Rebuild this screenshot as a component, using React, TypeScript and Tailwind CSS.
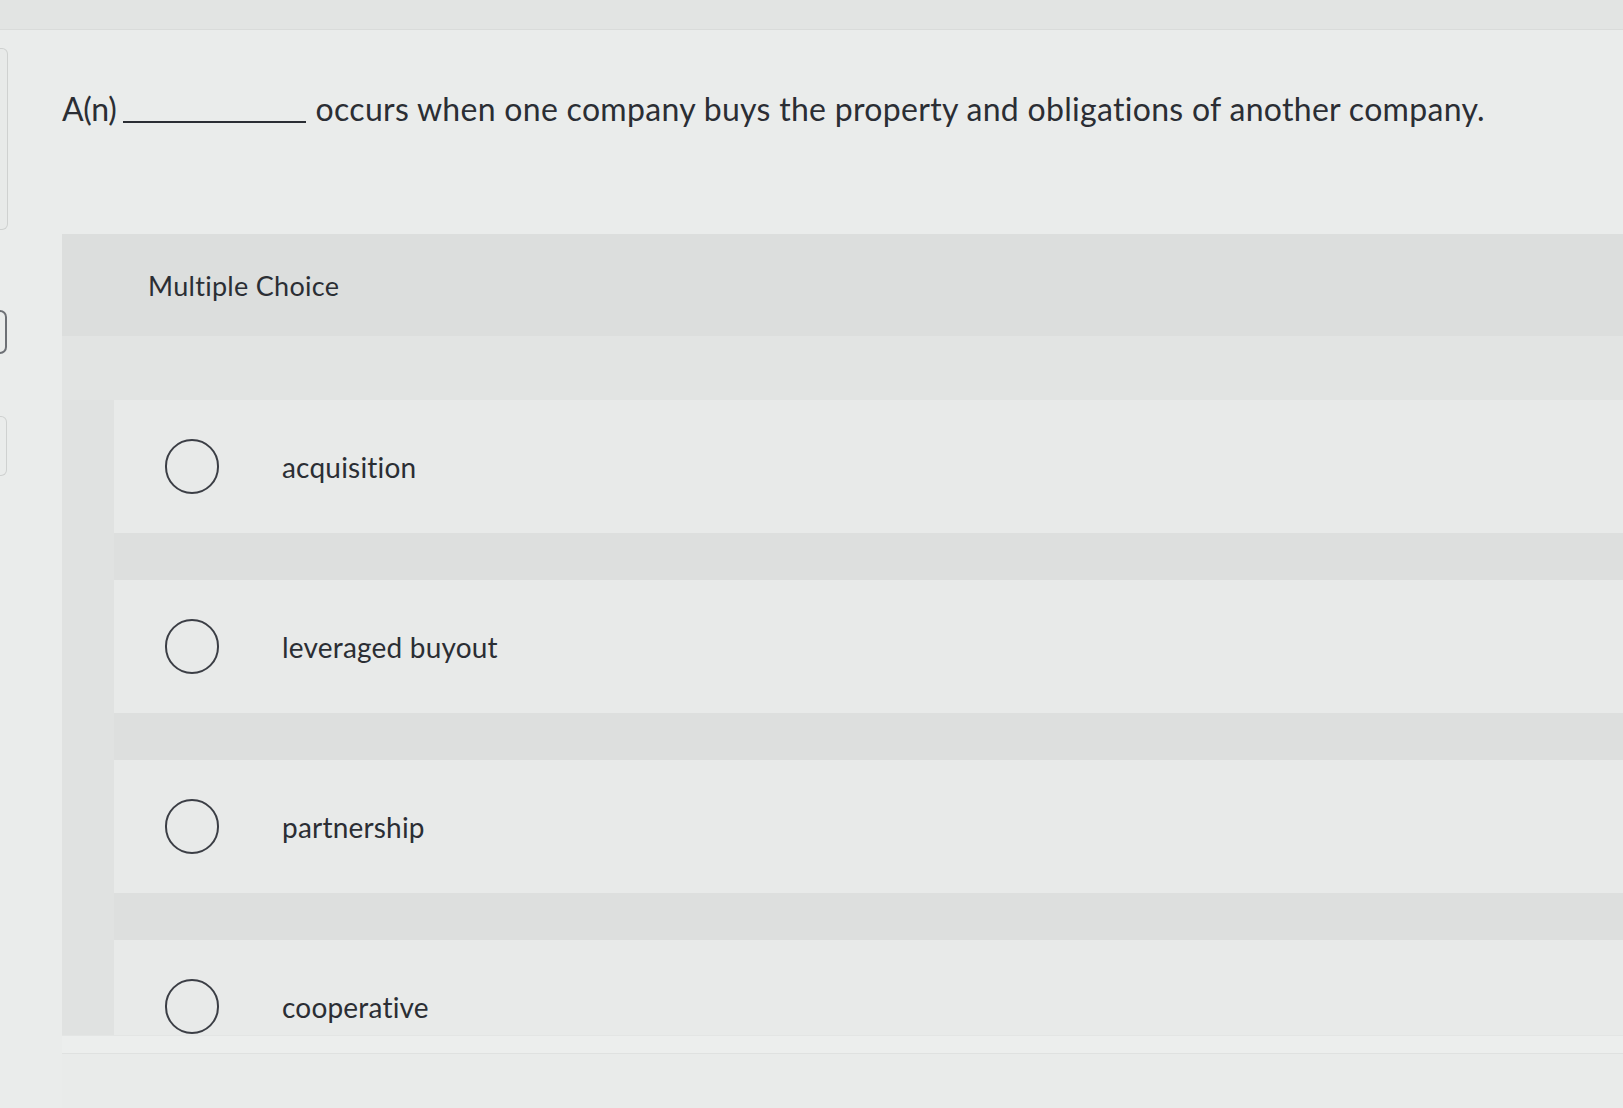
const options = ['acquisition', 'leveraged buyout', 'partnership', 'cooperative'];

function Radio() {
  return <span className="block w-[54px] h-[55px] rounded-full border-2 border-[#3b3e45] shrink-0" />;
}

export default function App() {
  return (
    <div
      className="w-full h-[1108px] bg-[#eaeceb] overflow-hidden flex flex-col text-[#2b2e34]"
      style={{ fontFamily: 'Lato, "Open Sans", sans-serif' }}
    >
      {/* Top band */}
      <div className="h-[30px] bg-[#e2e4e3] border-b border-[#d9dbda] shrink-0" />

      <div className="flex flex-1 min-h-0">
        {/* Left edge: cut-off sidebar cards */}
        <div className="w-[62px] shrink-0 flex flex-col pt-[18px]">
          <div className="w-[8px] h-[182px] border border-l-0 border-[#cfd1d0] rounded-r-md bg-[#e8eae9]" />
          <div className="w-[7px] h-[44px] mt-[80px] border-2 border-l-0 border-[#6d7075] rounded-r-full" />
          <div className="w-[7px] h-[60px] mt-[62px] border border-l-0 border-[#cfd1d0] rounded-r-md" />
        </div>

        <div className="flex-1 flex flex-col min-w-0">
          {/* Question */}
          <div className="h-[204px] pt-[60px] shrink-0">
            <p className="text-[32px] leading-[38px] flex items-baseline whitespace-nowrap">
              <span className="tracking-[-0.3px]">A(n)</span>
              <span className="inline-block w-[183px] ml-[6px] mr-[10px] border-b-2 border-[#2b2e34] translate-y-[2px]" />
              <span className="tracking-[0.3px]">occurs when one company buys the property and obligations of another company.</span>
            </p>
          </div>

          {/* Multiple choice panel */}
          <div className="h-[801px] bg-[#e0e2e1] flex flex-col overflow-hidden shrink-0">
            <div className="h-[102px] bg-[#dcdedd] pl-[86px] pt-[35px] shrink-0">
              <h2 className="text-[27px] leading-[34px] tracking-[0.3px]">Multiple Choice</h2>
            </div>
            <div className="h-[64px] bg-[#e2e4e3] shrink-0" />
            <div className="flex-1 pl-[52px] flex flex-col">
              {options.map((label) => (
                <div key={label} className="shrink-0 flex flex-col">
                  <div className="h-[133px] bg-[#e8eae9] flex items-center pl-[51px] gap-[63px]">
                    <Radio />
                    <span className="text-[28px] leading-[34px] tracking-[0.2px]">{label}</span>
                  </div>
                  <div className="h-[47px] bg-[#dddfde]" />
                </div>
              ))}
            </div>
          </div>

          <div className="h-[18px] bg-[#eceeed] border-t border-[#e3e5e4] shrink-0" />
          <div className="flex-1 bg-[#e9ebea] border-t border-[#dfe1e0]" />
        </div>
      </div>
    </div>
  );
}
